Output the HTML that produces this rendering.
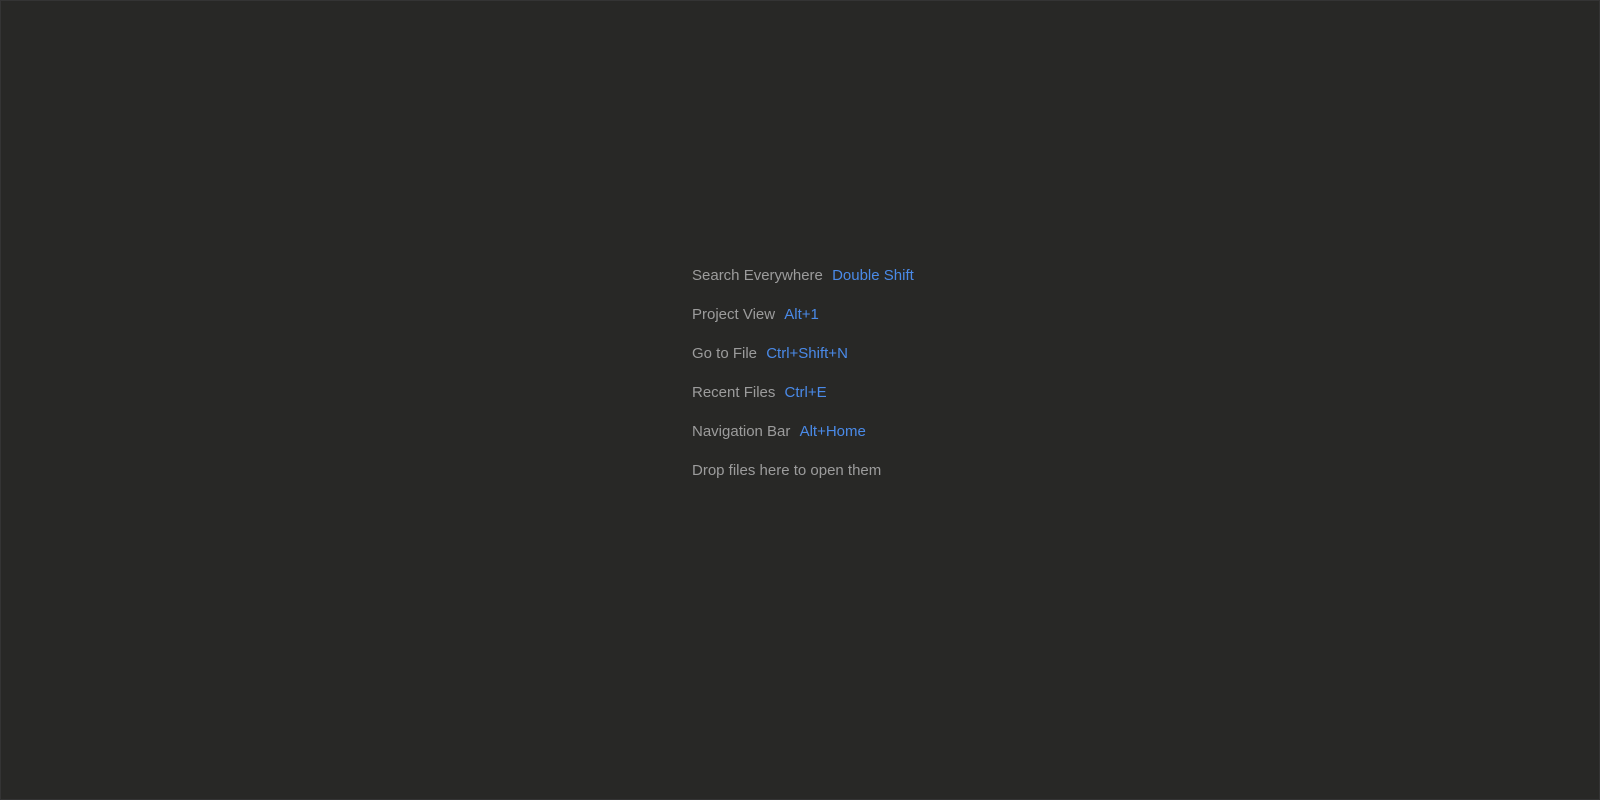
<!DOCTYPE html>
<html><head><style>
html,body{margin:0;padding:0;width:1600px;height:800px;overflow:hidden;background:#282826;}
body{box-sizing:border-box;border:1px solid #343434;position:relative;font-family:"Liberation Sans",sans-serif;font-size:15px;}
.l{position:absolute;left:691px;color:#9c9c9c;white-space:nowrap;line-height:18px;}
.k{color:#4a8ae8;margin-left:5px;}
</style></head><body>
<div class="l" style="top:266px">Search Everywhere <span class="k">Double Shift</span></div>
<div class="l" style="top:305px">Project View <span class="k">Alt+1</span></div>
<div class="l" style="top:344px">Go to File <span class="k">Ctrl+Shift+N</span></div>
<div class="l" style="top:383px">Recent Files <span class="k">Ctrl+E</span></div>
<div class="l" style="top:422px">Navigation Bar <span class="k">Alt+Home</span></div>
<div class="l" style="top:461px">Drop files here to open them</div>
</body></html>
